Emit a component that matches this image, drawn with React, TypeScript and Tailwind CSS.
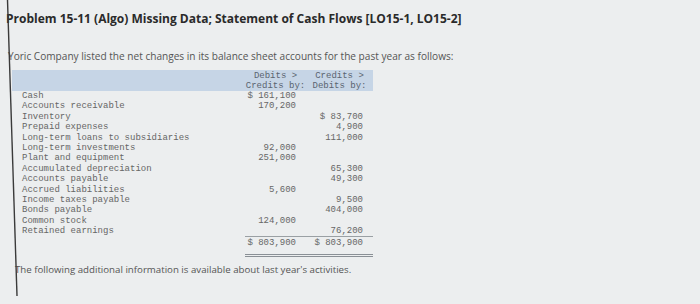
const rows: { label: string; debit?: string; credit?: string }[] = [
  { label: "Cash", debit: "$ 161,100" },
  { label: "Accounts receivable", debit: "170,200" },
  { label: "Inventory", credit: "$ 83,700" },
  { label: "Prepaid expenses", credit: "4,900" },
  { label: "Long-term loans to subsidiaries", credit: "111,000" },
  { label: "Long-term investments", debit: "92,000" },
  { label: "Plant and equipment", debit: "251,000" },
  { label: "Accumulated depreciation", credit: "65,300" },
  { label: "Accounts payable", credit: "49,300" },
  { label: "Accrued liabilities", debit: "5,600" },
  { label: "Income taxes payable", credit: "9,500" },
  { label: "Bonds payable", credit: "404,000" },
  { label: "Common stock", debit: "124,000" },
  { label: "Retained earnings", credit: "76,200" },
];

export default function App() {
  return (
    <div className="relative w-[700px] h-[304px] overflow-hidden bg-[#eceeef] font-['Open_Sans',sans-serif]">
      <h1 className="mt-[11px] pl-[6px] text-[12px] leading-[16px] font-bold text-[#2a2a2a]">
        Problem 15-11 (Algo) Missing Data; Statement of Cash Flows [LO15-1, LO15-2]
      </h1>
      <p className="mt-[23px] pl-[8px] text-[10.1px] leading-[12px] text-[#555]">
        Yoric Company listed the net changes in its balance sheet accounts for the past year as follows:
      </p>

      <div className="ml-[12px] mt-[8px] w-[361px] font-['Liberation_Mono',monospace] text-[9px] leading-[10.4px] text-[#666]">
        <div className="flex h-[21px] bg-[#c6d5e6] pt-[0.5px] text-[#5a6470]">
          <div className="flex-1" />
          <div className="w-[61px] text-center">
            <div>Debits &gt;</div>
            <div>Credits by:</div>
          </div>
          <div className="w-[67px] text-center">
            <div>Credits &gt;</div>
            <div>Debits by:</div>
          </div>
        </div>
        {rows.map((r, i) => (
          <div key={i} className="flex h-[10.4px]">
            <div className="flex-1 pl-[10px] whitespace-pre">{r.label}</div>
            <div className="w-[61px] pr-[10px] text-right">{r.debit}</div>
            <div className="w-[67px] pr-[10px] text-right">{r.credit}</div>
          </div>
        ))}
        <div className="flex">
          <div className="flex-1" />
          <div className="flex w-[128px] border-t border-[#9aa0a4] border-b-[3px] border-b-[#8a9096] [border-bottom-style:double] pt-[1px] pb-[5px]">
            <div className="w-[61px] pr-[10px] text-right">$ 803,900</div>
            <div className="w-[67px] pr-[10px] text-right">$ 803,900</div>
          </div>
        </div>
      </div>

      <p className="mt-[7px] pl-[15px] text-[9.7px] leading-[12px] text-[#555]">
        The following additional information is available about last year's activities.
      </p>

      <svg className="pointer-events-none absolute inset-0" width="700" height="304">
        <line x1="7.5" y1="0" x2="17" y2="296" stroke="#3a3a3a" strokeWidth="1.4" />
      </svg>
    </div>
  );
}
